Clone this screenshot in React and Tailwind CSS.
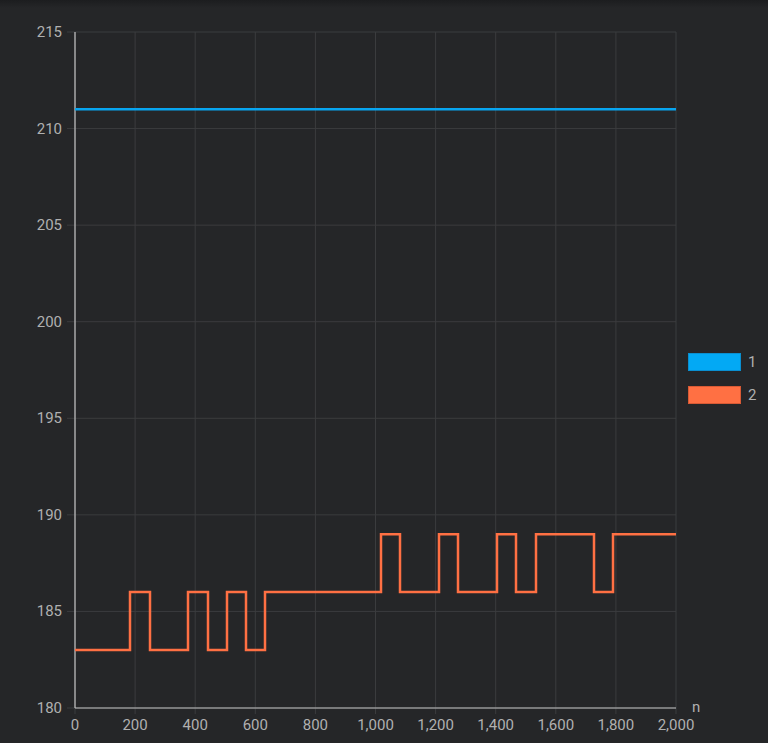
export default function App() {
  const X0 = 75, X1 = 676, Y0 = 32, Y1 = 708;
  const xs = (v) => X0 + (v / 2000) * (X1 - X0);
  const ys = (v) => Y1 - ((v - 180) / 35) * (Y1 - Y0);
  const steps = [[75,183],[130,186],[150,183],[188,186],[208,183],[227,186],[246,183],[265,186],[381,189],[400,186],[439,189],[458,186],[497,189],[516,186],[536,189],[594,186],[613,189]];
  let d = "";
  steps.forEach(([x, v], i) => {
    const y = ys(v);
    if (i === 0) d += `M${x},${y}`;
    else d += ` L${x},${ys(steps[i - 1][1])} L${x},${y}`;
  });
  d += ` L${X1},${ys(189)}`;
  const xt = [0,200,400,600,800,1000,1200,1400,1600,1800,2000];
  const yt = [180,185,190,195,200,205,210,215];
  const font = { fontFamily: "Roboto, 'Liberation Sans', sans-serif" };
  return (
    <div className="relative h-[743px] w-[768px] bg-[#252628] overflow-hidden" style={font}>
      <div className="absolute top-0 left-0 right-0 h-2 bg-gradient-to-b from-[#1c1d1f] to-[#252628]" />
      <div className="flex h-full">
        <svg width="688" height="743" className="shrink-0 overflow-visible">
          {xt.map((t) => (
            <g key={t}>
              <line x1={xs(t)} x2={xs(t)} y1={Y0} y2={Y1} stroke="#3b3c3e" strokeWidth="1" />
              <line x1={xs(t)} x2={xs(t)} y1={Y1} y2={Y1 + 6} stroke="#3b3c3e" />
              <text x={xs(t)} y={Y1 + 22} fill="#b0b0b0" fontSize="15" textAnchor="middle">{t.toLocaleString("en-US")}</text>
            </g>
          ))}
          {yt.map((t) => (
            <g key={t}>
              <line x1={X0 - 8} x2={X1} y1={ys(t)} y2={ys(t)} stroke="#3b3c3e" />
              <text x={X0 - 13} y={ys(t) + 5} fill="#b0b0b0" fontSize="15" textAnchor="end">{t}</text>
            </g>
          ))}
          <line x1={X0} x2={X0} y1={Y0} y2={Y1} stroke="#c4c4c4" strokeWidth="1.2" />
          <line x1={X0} x2={X1} y1={Y1} y2={Y1} stroke="#c4c4c4" strokeWidth="1.2" />
          <text x={X1 + 16} y={Y1 + 4} fill="#b0b0b0" fontSize="15">n</text>
          <line x1={X0} x2={X1} y1={ys(211)} y2={ys(211)} stroke="#08a5f0" strokeWidth="2.5" />
          <path d={d} fill="none" stroke="#ff7043" strokeWidth="2.5" strokeLinejoin="miter" />
        </svg>
        <div className="flex flex-col justify-center gap-[10px] pt-[14px]">
          <div className="flex items-center gap-[7px]">
            <div className="w-[53px] h-[18px] bg-[#03a9f4] border border-[#0a8fd0]" />
            <span className="text-[15px] text-[#b0b0b0]">1</span>
          </div>
          <div className="flex items-center gap-[7px]">
            <div className="w-[53px] h-[18px] bg-[#ff7043] border border-[#d85a35]" />
            <span className="text-[15px] text-[#b0b0b0]">2</span>
          </div>
        </div>
      </div>
    </div>
  );
}
